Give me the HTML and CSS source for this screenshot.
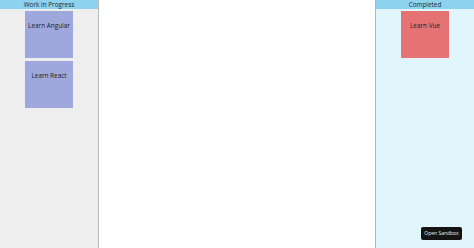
FILE: index.html
```html
<!DOCTYPE html>
<html>
<head>
<meta charset="utf-8">
<link rel="stylesheet" href="styles.css">
</head>
<body>
<div class="board">
  <section class="column column-progress">
    <header class="column-title">Work in Progress</header>
    <div class="cards">
      <div class="card card-blue">Learn Angular</div>
      <div class="card card-blue">Learn React</div>
    </div>
  </section>
  <div class="spacer"></div>
  <section class="column column-done">
    <header class="column-title">Completed</header>
    <div class="cards">
      <div class="card card-red">Learn Vue</div>
    </div>
  </section>
</div>
<a class="sandbox-btn">Open Sandbox</a>
</body>
</html>
```
FILE: styles.css
```css
html, body {
  margin: 0;
  padding: 0;
  height: 100%;
}
body {
  font-family: "Open Sans", "Liberation Sans", sans-serif;
  color: #222;
  background: #fff;
  overflow: hidden;
}
.board {
  display: flex;
  height: 248px;
}
.column {
  width: 98px;
  display: flex;
  flex-direction: column;
}
.column-progress {
  background: #eeeeee;
  border-right: 1px solid #b8b8b8;
}
.column-done {
  background: #e1f5fd;
  border-left: 1px solid #b8b8b8;
}
.spacer {
  flex: 1;
}
.column-title {
  height: 9px;
  line-height: 9px;
  font-size: 6.4px;
  text-align: center;
  background: #8dd3f0;
  color: #1e2a3a;
}
.cards {
  display: flex;
  flex-direction: column;
  align-items: center;
  gap: 3px;
  padding-top: 2px;
}
.card {
  width: 48px;
  height: 47px;
  box-sizing: border-box;
  padding-top: 10px;
  font-size: 6.4px;
  text-align: center;
  color: #222;
}
.card-blue {
  background: #9ea8dc;
}
.card-red {
  background: #e67373;
}
.sandbox-btn {
  position: absolute;
  right: 12px;
  bottom: 8px;
  width: 41px;
  height: 13px;
  line-height: 13px;
  background: #141414;
  color: #eee;
  font-size: 5px;
  text-align: center;
  border-radius: 2px;
}
```
